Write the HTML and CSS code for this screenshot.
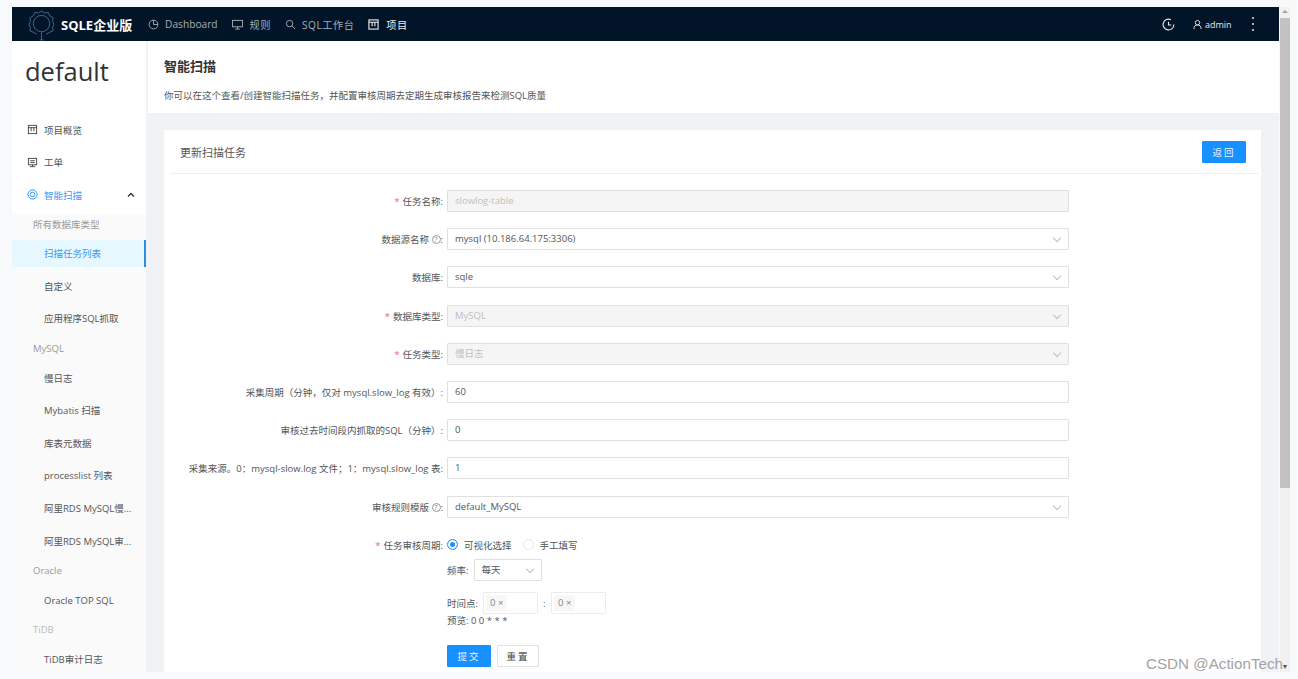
FILE: index.html
```html
<!DOCTYPE html>
<html lang="zh-CN">
  <head>
    <meta charset="UTF-8" />
    <title>SQLE 智能扫描</title>
    <link rel="stylesheet" href="styles.css">
  </head>

  <body>
    <div class="window">
      <div class="app">
        <header class="topbar">
          <svg class="logo" viewBox="0 0 28 32" fill="none" stroke="#3f6c8c" stroke-width="1">
            <circle cx="14" cy="14" r="8.5" />
            <path d="M14 1l3 2 4-.5 1.5 3.5 3.500 2-.5 4 1.500 3-1.500 3 .5 3.500-3.500 1.500L19 25M14 1l-3 2-4-.5L5.500 6 2 8l.5 4L1 15l1.500 3-.5 3.500L5.500 23 9 25" />
            <path d="M14 23v8M12 31h4" />
          </svg>
          <span class="brand">SQLE企业版</span>
          <nav class="topnav">
            <a class="topnav-item dash">
              <svg class="nav-icon" viewBox="0 0 12 12" fill="none" stroke="currentColor"><circle cx="6" cy="6" r="4.800" /><path d="M6 1.200V6h4.800" /></svg>
              Dashboard
            </a>
            <a class="topnav-item cjk">
              <svg class="nav-icon wide" viewBox="0 0 12 12" fill="none" stroke="currentColor"><rect x=".5" y="1.500" width="11" height="7" /><path d="M6 8.500v2.500M3.500 11h5" /></svg>
              规则
            </a>
            <a class="topnav-item cjk">
              <svg class="nav-icon" viewBox="0 0 12 12" fill="none" stroke="currentColor"><circle cx="5" cy="5" r="3.500" /><path d="M7.500 7.500L11 11" /></svg>
              SQL工作台
            </a>
            <a class="topnav-item cjk current">
              <svg class="nav-icon" viewBox="0 0 12 12" fill="none" stroke="currentColor" stroke-width="1.200"><rect x="1" y="1" width="10" height="10" /><path d="M1 3.500h10M4.500 3.500v4.500M7.500 3.500v4.500" /></svg>
              项目
            </a>
          </nav>
          <div class="topbar-right">
            <svg class="history" viewBox="0 0 14 14" fill="none" stroke="#e8e8e8" stroke-width="1.200"><path d="M9.500 1.800A5.800 5.800 0 1 0 12.800 7" /><path d="M7 4v3.500h3" /></svg>
            <span class="user">
              <svg class="user-icon" viewBox="0 0 10 10" fill="none" stroke="#e8e8e8"><circle cx="5" cy="3" r="2.500" /><path d="M1 10c0-3 1.500-4.500 4-4.500S9 7 9 10" /></svg>
              admin
            </span>
            <span class="dots"><i></i><i></i><i></i></span>
          </div>
        </header>

        <div class="layout">
          <aside class="sidebar">
            <div class="project-name">default</div>
            <ul class="menu">
              <li class="menu-item">
                <svg class="menu-icon" viewBox="0 0 12 12" fill="none" stroke="#444"><rect x="1.500" y="1.500" width="9" height="9" /><path d="M1.500 4h9M4.500 4v4M7.500 4v4" /></svg>
                项目概览
              </li>
              <li class="menu-item">
                <svg class="menu-icon" viewBox="0 0 12 12" fill="none" stroke="#444"><rect x="1.500" y="1.500" width="9" height="7" /><path d="M3.500 4h5M3.500 6h5M6 8.500v2M3 10.500h6" /></svg>
                工单
              </li>
              <li class="menu-item open">
                <svg class="menu-icon" viewBox="0 0 12 12" fill="none" stroke="#1890ff"><circle cx="6" cy="6" r="5" /><circle cx="6" cy="6" r="2.500" /></svg>
                智能扫描
                <svg class="caret" viewBox="0 0 8 6" fill="none" stroke="#333" stroke-width="1.300"><path d="M1 4.500L4 1.500l3 3" /></svg>
              </li>
            </ul>
            <ul class="submenu">
              <li class="group">所有数据库类型</li>
              <li class="sub-item active">扫描任务列表</li>
              <li class="sub-item">自定义</li>
              <li class="sub-item">应用程序SQL抓取</li>
              <li class="group">MySQL</li>
              <li class="sub-item">慢日志</li>
              <li class="sub-item">Mybatis 扫描</li>
              <li class="sub-item">库表元数据</li>
              <li class="sub-item">processlist 列表</li>
              <li class="sub-item">阿里RDS MySQL慢...</li>
              <li class="sub-item">阿里RDS MySQL审...</li>
              <li class="group">Oracle</li>
              <li class="sub-item">Oracle TOP SQL</li>
              <li class="group faint">TiDB</li>
              <li class="sub-item">TiDB审计日志</li>
            </ul>
          </aside>

          <main class="content">
            <section class="page-head">
              <h1>智能扫描</h1>
              <p>你可以在这个查看/创建智能扫描任务，并配置审核周期去定期生成审核报告来检测SQL质量</p>
            </section>

            <section class="card">
              <div class="card-head">
                <span>更新扫描任务</span>
                <button class="btn primary">返回</button>
              </div>

              <form class="form">
                <div class="row">
                  <label class="required">任务名称:</label>
                  <div class="control disabled">slowlog-table</div>
                </div>
                <div class="row">
                  <label>数据源名称 <span class="help">?</span>:</label>
                  <div class="control select">mysql (10.186.64.175:3306)</div>
                </div>
                <div class="row">
                  <label>数据库:</label>
                  <div class="control select">sqle</div>
                </div>
                <div class="row">
                  <label class="required">数据库类型:</label>
                  <div class="control select disabled">MySQL</div>
                </div>
                <div class="row">
                  <label class="required">任务类型:</label>
                  <div class="control select disabled">慢日志</div>
                </div>
                <div class="row">
                  <label>采集周期（分钟，仅对 mysql.slow_log 有效）:</label>
                  <div class="control">60</div>
                </div>
                <div class="row">
                  <label>审核过去时间段内抓取的SQL（分钟）:</label>
                  <div class="control">0</div>
                </div>
                <div class="row">
                  <label>采集来源。0：mysql-slow.log 文件；1：mysql.slow_log 表:</label>
                  <div class="control">1</div>
                </div>
                <div class="row">
                  <label>审核规则模版 <span class="help">?</span>:</label>
                  <div class="control select">default_MySQL</div>
                </div>
                <div class="row">
                  <label class="required">任务审核周期:</label>
                  <div class="radios">
                    <span class="radio checked"></span><span class="radio-text">可视化选择</span>
                    <span class="radio"></span><span class="radio-text">手工填写</span>
                  </div>
                </div>

                <div class="cron">
                  <div class="cron-line">
                    频率:
                    <div class="control select small freq">每天</div>
                  </div>
                  <div class="cron-line time">
                    时间点:
                    <div class="control small pick"><span class="tag">0 ×</span></div>
                    <span class="sep">:</span>
                    <div class="control small pick"><span class="tag">0 ×</span></div>
                  </div>
                  <div class="preview">预览: 0 0 * * *</div>
                  <div class="actions">
                    <button class="btn primary" type="button">提交</button>
                    <button class="btn" type="button">重置</button>
                  </div>
                </div>
              </form>
            </section>
          </main>
        </div>
      </div>

      <div class="scrollbar">
        <span class="scroll-up"></span>
        <span class="scroll-thumb"></span>
      </div>
    </div>

    <div class="watermark">CSDN @ActionTech<small>▾</small></div>
  </body>
</html>
```

FILE: styles.css
```css
* {
  box-sizing: border-box;
}

html,
body {
  height: 100%;
}

body {
  margin: 0;
  background-color: #f8f9fb;
  font-family: "Open Sans", "Noto Sans CJK SC", sans-serif;
  font-size: 9.500px;
  color: #555;
  overflow: hidden;
}

ul {
  list-style: none;
  margin: 0;
  padding: 0;
}

.window {
  display: flex;
  height: 665px;
  margin: 7px 8px 0 12px;
  overflow: hidden;
}

.app {
  width: 1268px;
  display: flex;
  flex-direction: column;
}

/* top bar */
.topbar {
  height: 34px;
  flex-shrink: 0;
  display: flex;
  align-items: center;
  padding-left: 16px;
  background-color: #021528;
  color: #a5aeb7;
}

.logo {
  width: 27px;
  height: 31px;
  margin-top: 2px;
}

.brand {
  margin-left: 6px;
  width: 87px;
  font-size: 13px;
  font-weight: 700;
  color: #fff;
  white-space: nowrap;
}

.topnav {
  display: flex;
  gap: 14px;
}

.topnav-item {
  display: flex;
  align-items: center;
  gap: 6px;
  font-size: 10.200px;
  white-space: nowrap;
}

.topnav-item.dash {
  margin-right: -1px;
}

.topnav-item.cjk {
  letter-spacing: 0.5px;
}

.topnav-item.current {
  color: #f0f0f0;
  gap: 7px;
}

.nav-icon {
  width: 11px;
  height: 11px;
}

.nav-icon.wide {
  width: 13px;
}

.topbar-right {
  margin-left: auto;
  display: flex;
  align-items: center;
  color: #e8e8e8;
  padding-right: 25px;
}

.history {
  width: 13px;
  height: 13px;
}

.user {
  display: flex;
  align-items: center;
  gap: 3px;
  margin-left: 18px;
  font-size: 9px;
}

.user-icon {
  width: 9px;
  height: 9px;
}

.dots {
  display: flex;
  flex-direction: column;
  gap: 3.500px;
  margin-left: 20px;
}

.dots i {
  width: 2.500px;
  height: 2.500px;
  border-radius: 50%;
  background-color: #e8e8e8;
}

/* sidebar */
.layout {
  flex: 1;
  display: flex;
  min-height: 0;
}

.sidebar {
  width: 134px;
  flex-shrink: 0;
  background-color: #fff;
  box-shadow: 1px 0 3px rgba(0, 0, 0, 0.08);
}

.project-name {
  height: 72px;
  padding: 11px 0 0 13px;
  font-size: 25.500px;
  line-height: 38px;
  color: #333;
}

.menu {
  padding-top: 3px;
}

.menu-item {
  position: relative;
  display: flex;
  align-items: center;
  gap: 6px;
  height: 27px;
  margin-bottom: 5.600px;
  padding-left: 15px;
  color: #555;
}

.menu-item.open {
  color: #3a9bf0;
}

.menu-icon {
  width: 11px;
  height: 11px;
}

.caret {
  position: absolute;
  right: 11px;
  top: 11px;
  width: 8px;
  height: 6px;
}

.submenu {
  height: 460px;
  overflow: hidden;
  background-color: #fafafa;
}

.group {
  height: 26.500px;
  padding: 4px 0 0 21px;
  line-height: 14px;
  color: #999;
}

.group.faint {
  color: #bbb;
}

.sub-item {
  height: 27px;
  margin-bottom: 5.600px;
  padding-left: 32px;
  line-height: 27px;
  color: #555;
  white-space: nowrap;
}

.sub-item.active {
  background-color: #e6f7ff;
  border-right: 2px solid #2b8fe0;
  color: #3a9bf0;
}

/* main column */
.content {
  flex: 1;
  min-width: 0;
  background-color: #f0f2f5;
  overflow: hidden;
}

.page-head {
  height: 72px;
  margin-left: 2px;
  padding: 15px 16px 0;
  background-color: #fff;
}

.page-head h1 {
  margin: 0 0 13px;
  font-size: 13px;
  line-height: 20px;
  font-weight: 600;
  color: #333;
}

.page-head p {
  margin: 0;
  font-size: 9.500px;
  line-height: 14px;
  color: #555;
}

.card {
  margin: 17px 18px 0;
  height: 560px;
  background-color: #fff;
}

.card-head {
  display: flex;
  align-items: center;
  justify-content: space-between;
  height: 44px;
  margin: 0 2px 0 6px;
  padding: 0 13px 0 10px;
  border-bottom: 1px solid #f0f0f0;
  font-size: 11px;
  color: #555;
}

.btn {
  height: 22px;
  width: 42px;
  padding: 0;
  border: 1px solid #e3e3e3;
  border-radius: 1px;
  background-color: #fff;
  font-family: inherit;
  font-size: 9.500px;
  letter-spacing: 2px;
  color: #444;
}

.btn.primary {
  width: 44px;
  border-color: #1890ff;
  background-color: #1890ff;
  color: #e8f4ff;
}

/* form */
.form {
  padding: 8px 0 0 16px;
}

.row {
  display: flex;
  align-items: center;
  height: 38.200px;
}

.row label {
  width: 263px;
  margin-right: 4px;
  text-align: right;
  white-space: nowrap;
  color: #555;
}

.required::before {
  content: "*";
  margin-right: 3px;
  color: #f5616a;
}

.help {
  display: inline-block;
  width: 9px;
  height: 9px;
  border: 1px solid #999;
  border-radius: 50%;
  font-size: 7px;
  line-height: 7px;
  text-align: center;
  vertical-align: 1px;
  color: #888;
}

.control {
  position: relative;
  width: 622px;
  height: 22px;
  padding: 0 7px;
  border: 1px solid #e0e0e0;
  border-radius: 1px;
  background-color: #fff;
  line-height: 20px;
  color: #555;
}

.control.disabled {
  background-color: #f5f5f5;
  color: #bfbfbf;
}

.control.select::after {
  content: "";
  position: absolute;
  right: 8px;
  top: 6px;
  width: 5px;
  height: 5px;
  border-right: 1px solid #bfbfbf;
  border-bottom: 1px solid #bfbfbf;
  transform: rotate(45deg);
}

.radios {
  display: flex;
  align-items: center;
}

.radio {
  width: 11px;
  height: 11px;
  margin-right: 6px;
  border: 1px solid #e6e6e6;
  border-radius: 50%;
  background-color: #fff;
}

.radio.checked {
  border-color: #1890ff;
  box-shadow: inset 0 0 0 2px #fff, inset 0 0 0 6px #1890ff;
}

.radio-text {
  margin-right: 11px;
  color: #555;
}

.cron {
  margin-top: -4.500px;
  padding-left: 267px;
}

.cron-line {
  display: flex;
  align-items: center;
  height: 22px;
  white-space: nowrap;
}

.cron-line .control {
  margin-left: 5px;
}

.control.freq {
  width: 68px;
  margin-left: 5px;
  padding-left: 7px;
}

.time {
  margin-top: 11px;
}

.control.pick {
  width: 55px;
  padding: 2px 2px 0 2px;
  border-color: #ececec;
  line-height: 16px;
}

.tag {
  display: inline-block;
  padding: 0 4px;
  background-color: #f7f7f7;
  color: #888;
}

.sep {
  margin-left: 5px;
  width: 3px;
}

.preview {
  height: 14px;
  line-height: 14px;
}

.actions {
  display: flex;
  gap: 6px;
  margin-top: 17px;
}

/* scrollbar */
.scrollbar {
  position: relative;
  width: 10px;
  margin-left: 1px;
  background-color: #f1f1f1;
}

.scroll-up {
  position: absolute;
  left: 2px;
  top: 3px;
  border: 3px solid transparent;
  border-top: 0;
  border-bottom: 3px solid #a0a0a0;
}

.scroll-thumb {
  position: absolute;
  left: 0;
  right: 0;
  top: 11px;
  height: 470px;
  background-color: #c3c1c1;
}

.watermark {
  position: absolute;
  left: 1146px;
  top: 655px;
  font-family: "Liberation Sans", sans-serif;
  font-size: 15.200px;
  line-height: 18px;
  color: #a3a3a3;
  white-space: nowrap;
}

.watermark small {
  font-size: 8px;
  color: #555;
}
```
